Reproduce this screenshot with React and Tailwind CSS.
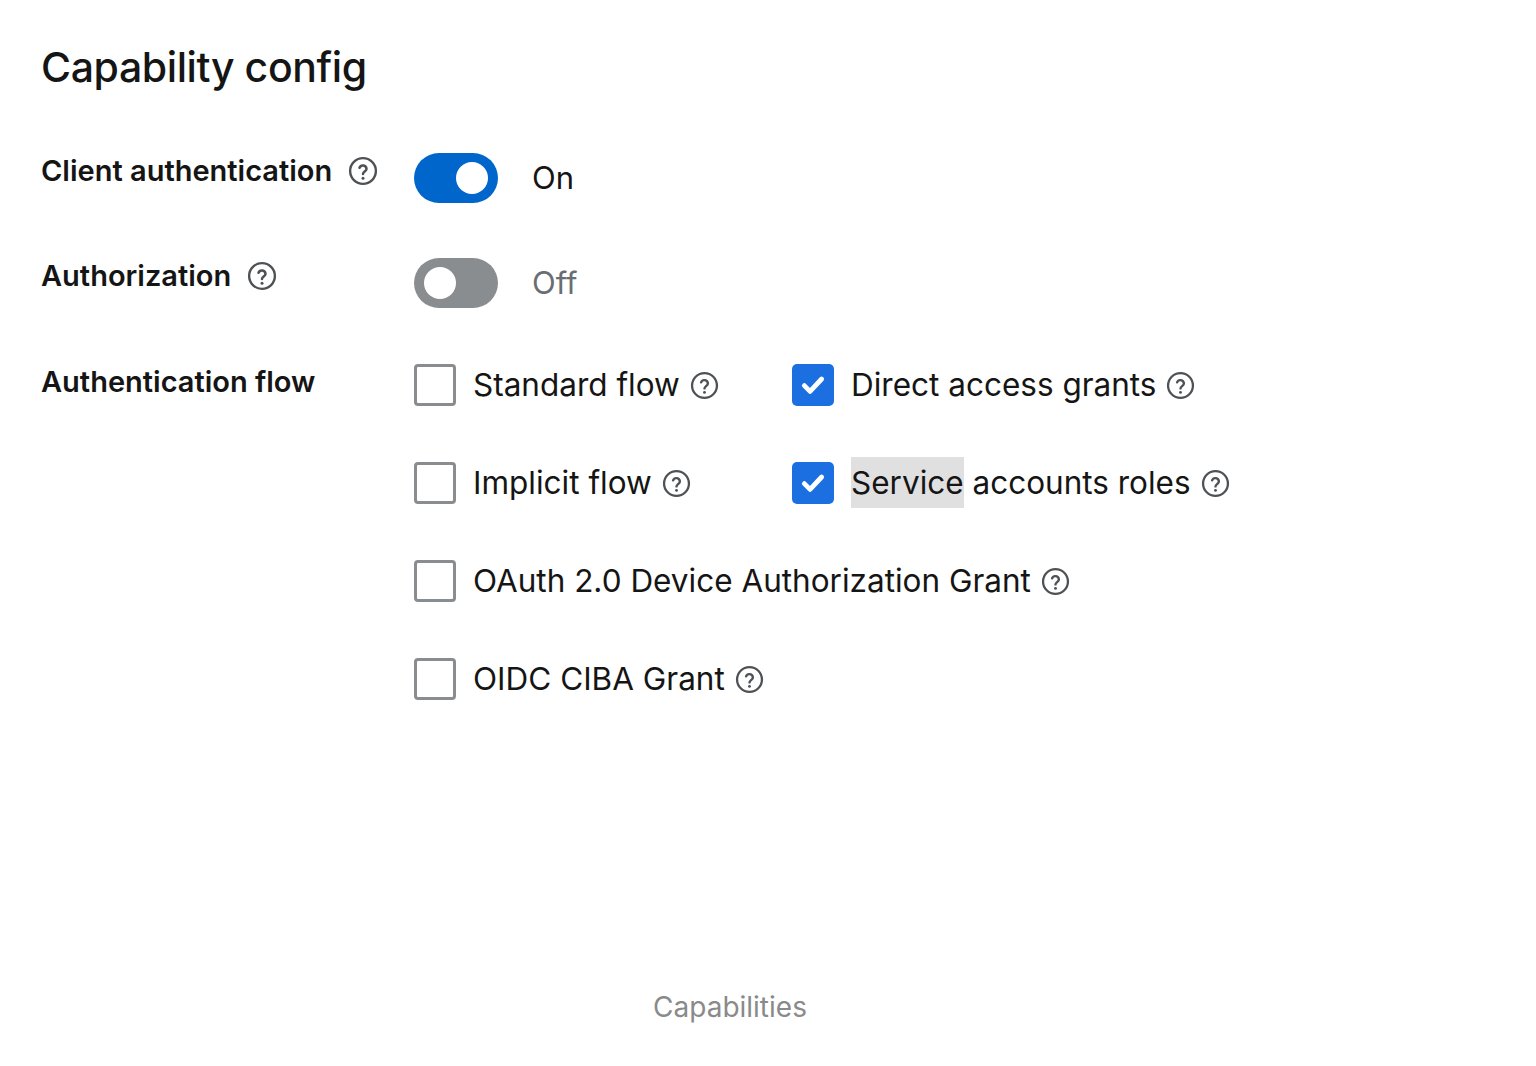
import React from 'react';

const HelpIcon = ({ className = '' }) => (
  <svg viewBox="0 0 24 24" className={className} fill="none" stroke="currentColor">
    <circle cx="12" cy="12" r="10.3" strokeWidth="1.9" />
    <path d="M9.2 9.4a2.9 2.9 0 0 1 5.6 0.9c0 1.9-2.8 2.4-2.8 4.1" strokeWidth="2" strokeLinecap="round" />
    <circle cx="12" cy="17.7" r="1.2" fill="currentColor" stroke="none" />
  </svg>
);

const Toggle = ({ on }) => (
  <div
    className={`w-[84px] h-[50px] rounded-full flex items-center px-[10px] ${
      on ? 'bg-[#0066cc] justify-end' : 'bg-[#8a8d90] justify-start'
    }`}
  >
    <div className="w-[32px] h-[32px] rounded-full bg-white" />
  </div>
);

const Checkbox = ({ checked }) =>
  checked ? (
    <div className="w-[42px] h-[42px] rounded-[5px] bg-[#1c6fe0] flex items-center justify-center shrink-0">
      <svg viewBox="0 0 24 24" className="w-[32px] h-[32px]" fill="none" stroke="white" strokeWidth="3.6" strokeLinecap="round" strokeLinejoin="round">
        <path d="M5.5 12.5l4.3 4.3L18.5 7.5" />
      </svg>
    </div>
  ) : (
    <div className="w-[42px] h-[42px] rounded-[4px] border-[3px] border-[#8a8d90] bg-white shrink-0" />
  );

const Option = ({ checked, children }) => (
  <div className="flex items-center">
    <Checkbox checked={checked} />
    <span className="ml-[17px] text-[31.5px] text-[#151515] leading-none">{children}</span>
    <HelpIcon className="ml-[10px] w-[29px] h-[29px] text-[#4f5255]" />
  </div>
);

export default function App() {
  return (
    <div
      className="w-[1536px] h-[1066px] bg-white flex flex-col"
      style={{ fontFamily: 'Inter, "Noto Sans", sans-serif' }}
    >
      <div className="pl-[41px] pt-[42px] flex-1">
        <h1 className="text-[41px] font-medium text-[#151515] leading-[50px] tracking-[-0.4px]">Capability config</h1>

        <div className="mt-[61px] flex flex-col">
          {/* client auth */}
          <div className="flex items-start h-[105px]">
            <div className="w-[373px] flex items-center pt-[3px]">
              <span className="text-[29px] font-semibold text-[#151515] leading-[30px]">Client authentication</span>
              <HelpIcon className="ml-[16px] w-[30px] h-[30px] text-[#4f5255]" />
            </div>
            <div className="flex items-center">
              <Toggle on />
              <span className="ml-[34px] text-[31px] text-[#151515]">On</span>
            </div>
          </div>

          {/* authorization */}
          <div className="flex items-start h-[106px]">
            <div className="w-[373px] flex items-center pt-[3px]">
              <span className="text-[29px] font-semibold text-[#151515] leading-[30px]">Authorization</span>
              <HelpIcon className="ml-[16px] w-[30px] h-[30px] text-[#4f5255]" />
            </div>
            <div className="flex items-center">
              <Toggle on={false} />
              <span className="ml-[34px] text-[31px] text-[#6a6e73]">Off</span>
            </div>
          </div>

          {/* authentication flow */}
          <div className="flex items-start">
            <div className="w-[373px] pt-[3px]">
              <span className="text-[29px] font-semibold text-[#151515] leading-[30px]">Authentication flow</span>
            </div>
            <div className="flex flex-col gap-[56px]">
              <div className="grid grid-cols-[378px_auto] gap-y-[56px]">
                <Option>Standard flow</Option>
                <Option checked>Direct access grants</Option>
                <Option>Implicit flow</Option>
                <div className="flex items-center">
                  <Checkbox checked />
                  <span className="ml-[17px] text-[31.5px] text-[#151515] leading-none">
                    <span className="bg-[#e0e0e0] py-[6px]">Service</span> accounts roles
                  </span>
                  <HelpIcon className="ml-[10px] w-[29px] h-[29px] text-[#4f5255]" />
                </div>
              </div>
              <Option>OAuth 2.0 Device Authorization Grant</Option>
              <Option>OIDC CIBA Grant</Option>
            </div>
          </div>
        </div>
      </div>

      <div className="h-[80px] flex justify-center">
        <span className="text-[28px] text-[#8a8a8a] ml-[-76px]">Capabilities</span>
      </div>
    </div>
  );
}
